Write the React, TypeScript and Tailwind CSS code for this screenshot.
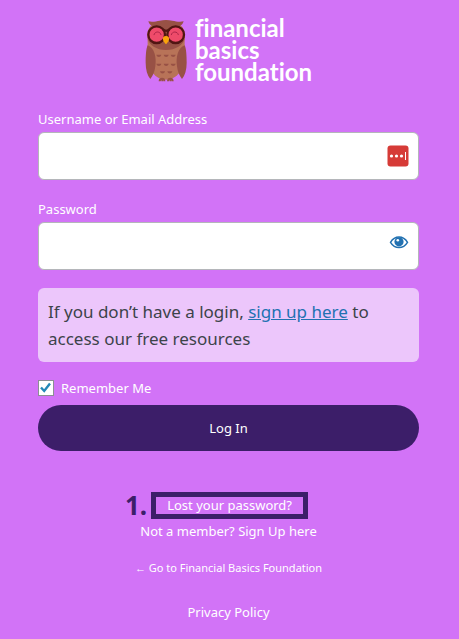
import { useState } from "react";

function Owl() {
  return (
    <svg aria-hidden viewBox="12 15 126 189" className="h-[63px] w-[42px] shrink-0">
      <path
        d="M19 70C16 36 40 20 75 20s60 16 57 50c-2 14 0 38-1 60-2 36-22 67-56 67s-53-31-55-67c-1-22 1-46-1-60z"
        fill="#b87358"
      />
      <path d="M22 22c12 3 24 0 34-2 12-3 26-3 38 0 10 2 22 5 34 2-2 8-7 12-14 16l-39 8-39-8c-7-4-12-8-14-16z" fill="#985145" />
      <path d="M20 74c14 9 26 9 36 9h40c12 0 22 0 35-9-4 18-27 34-56 34S24 92 20 74z" fill="#985145" />
      <path d="M20 94c20 8 27 35 23 63-2 17-8 30-15 38-9-11-14-28-14-49 0-20 1-41 6-52z" fill="#985145" />
      <path d="M131 94c-20 8-27 35-23 63 2 17 8 30 15 38 9-11 14-28 14-49 0-20-1-41-6-52z" fill="#985145" />
      <g fill="#985145">
        <path d="M46 122h15c-2 9-13 9-15 0zM68 122h15c-2 9-13 9-15 0zM89 122h15c-2 9-13 9-15 0z" />
        <path d="M46 149h15c-2 9-13 9-15 0zM68 149h15c-2 9-13 9-15 0zM89 149h15c-2 9-13 9-15 0z" />
        <path d="M57 172h15c-2 9-13 9-15 0zM79 172h15c-2 9-13 9-15 0z" />
        <path d="M53 202c0-8 4-11 10-11s10 3 10 11h-6v-5l-1 5h-5v-5l-2 5zM78 202c0-8 4-11 10-11s10 3 10 11h-6v-5l-1 5h-5v-5l-2 5z" />
      </g>
      <g fill="#ee4b6a" stroke="#511512" strokeWidth="7">
        <circle cx="47" cy="62" r="25" />
        <circle cx="104" cy="62" r="25" />
      </g>
      <path d="M66 46q9 8 19 0" fill="none" stroke="#511512" strokeWidth="7" />
      <g fill="none" stroke="#ad2448" strokeWidth="3" strokeLinecap="round">
        <path d="M39 62c2-11 19-11 21 0" />
        <path d="M91 62c2-11 19-11 21 0" />
      </g>
      <path d="M75 66c7 0 11 5 9 11-1 5-5 9-9 14-4-5-8-9-9-14-2-6 2-11 9-11z" fill="#faa40a" />
    </svg>
  );
}

function PasswordManagerIcon() {
  return (
    <svg aria-hidden viewBox="0 0 22 22" className="size-[22px]">
      <rect x="0.5" y="0.5" width="21" height="21" rx="3" fill="#d63b37" />
      <g fill="#fff">
        <circle cx="4.5" cy="11" r="1.6" />
        <circle cx="9.5" cy="11" r="1.6" />
        <circle cx="14.5" cy="11" r="1.6" />
        <rect x="18" y="7" width="1" height="8" />
      </g>
    </svg>
  );
}

function EyeIcon() {
  return (
    <svg aria-hidden viewBox="0 0 20 20" className="size-5">
      <path
        d="M1.500 10.300c2-3.200 5-5.200 8.500-5.200s6.500 2 8.500 5.200c-2 3.200-5 5.200-8.500 5.200s-6.500-2-8.500-5.200z"
        fill="none"
        stroke="#2271b1"
        strokeWidth="1.500"
      />
      <circle cx="10" cy="9.800" r="4.600" fill="#2271b1" />
      <circle cx="8.800" cy="8.200" r="1.300" fill="#fff" />
    </svg>
  );
}

const inputClass =
  "block h-12 w-full rounded-md border border-[#b4b6ba] bg-white px-3 pr-12 text-xl text-[#2c3338] outline-none";

export default function App() {
  const [remember, setRemember] = useState(true);
  const [visible, setVisible] = useState(false);

  return (
    <main className="min-h-screen bg-[#d273f7] pr-10 pb-4 pl-[38px] pt-[17px] font-['Noto_Sans',sans-serif] text-[13px] leading-5 text-white">
      <h1>
        <a
          href="#"
          className="flex items-center justify-center gap-2 font-['Lato',sans-serif] text-[24px] leading-[22px] font-bold [font-variant-ligatures:none]"
        >
          <Owl />
          <span>
            financial
            <br />
            basics
            <br />
            foundation
          </span>
        </a>
      </h1>

      <form className="mt-[26px]" onSubmit={(e) => e.preventDefault()}>
        <label htmlFor="user" className="block">
          Username or Email Address
        </label>
        <div className="relative mt-[3px]">
          <input id="user" type="text" autoComplete="username" className={inputClass} />
          <span className="pointer-events-none absolute top-[13px] right-[10px]">
            <PasswordManagerIcon />
          </span>
        </div>

        <label htmlFor="pass" className="mt-[19px] block">
          Password
        </label>
        <div className="relative mt-[3px]">
          <input
            id="pass"
            type={visible ? "text" : "password"}
            autoComplete="current-password"
            className={inputClass}
          />
          <button
            type="button"
            aria-label="Show password"
            onClick={() => setVisible(!visible)}
            className="absolute top-0 right-0 flex h-10 w-10 items-center justify-center"
          >
            <EyeIcon />
          </button>
        </div>

        <p className="mt-[18px] rounded-md bg-[#ecc6fb] px-[10px] py-[10px] text-[17px] leading-[27px] text-[#3c434a]">
          If you don’t have a login,{" "}
          <a href="#" className="text-[#2271b1] underline">
            sign up here
          </a>{" "}
          to access our free resources
        </p>

        <div className="mt-4 flex items-center gap-[7px]">
          <span className="relative size-4">
            <input
              id="remember"
              type="checkbox"
              checked={remember}
              onChange={(e) => setRemember(e.target.checked)}
              className="peer block size-4 appearance-none border border-[#8c8f94] bg-white"
            />
            <svg
              aria-hidden
              viewBox="0 0 16 16"
              className="pointer-events-none absolute inset-0 hidden size-4 peer-checked:block"
            >
              <path d="M3 7.500l3.200 3.500L12 3.500" fill="none" stroke="#2388b8" strokeWidth="2.400" />
            </svg>
          </span>
          <label htmlFor="remember">Remember Me</label>
        </div>

        <button
          type="submit"
          className="mt-[7px] block h-[46px] w-full rounded-full bg-[#3c1e69]"
        >
          Log In
        </button>
      </form>

      <nav className="mt-[41px] flex flex-col items-center">
        <div className="flex items-center gap-1 pr-6">
          <span className="text-[26px] leading-[27px] font-bold text-[#3c1e69]">1.</span>
          <a href="#" className="border-[5px] border-[#3c1e69] px-[11px] leading-[17px]">
            Lost your password?
          </a>
        </div>
        <a href="#" className="mt-[2px]">
          Not a member? Sign Up here
        </a>
        <a href="#" className="mt-[17px] text-[11px]">
          ← Go to Financial Basics Foundation
        </a>
        <a href="#" className="mt-6">
          Privacy Policy
        </a>
      </nav>
    </main>
  );
}
